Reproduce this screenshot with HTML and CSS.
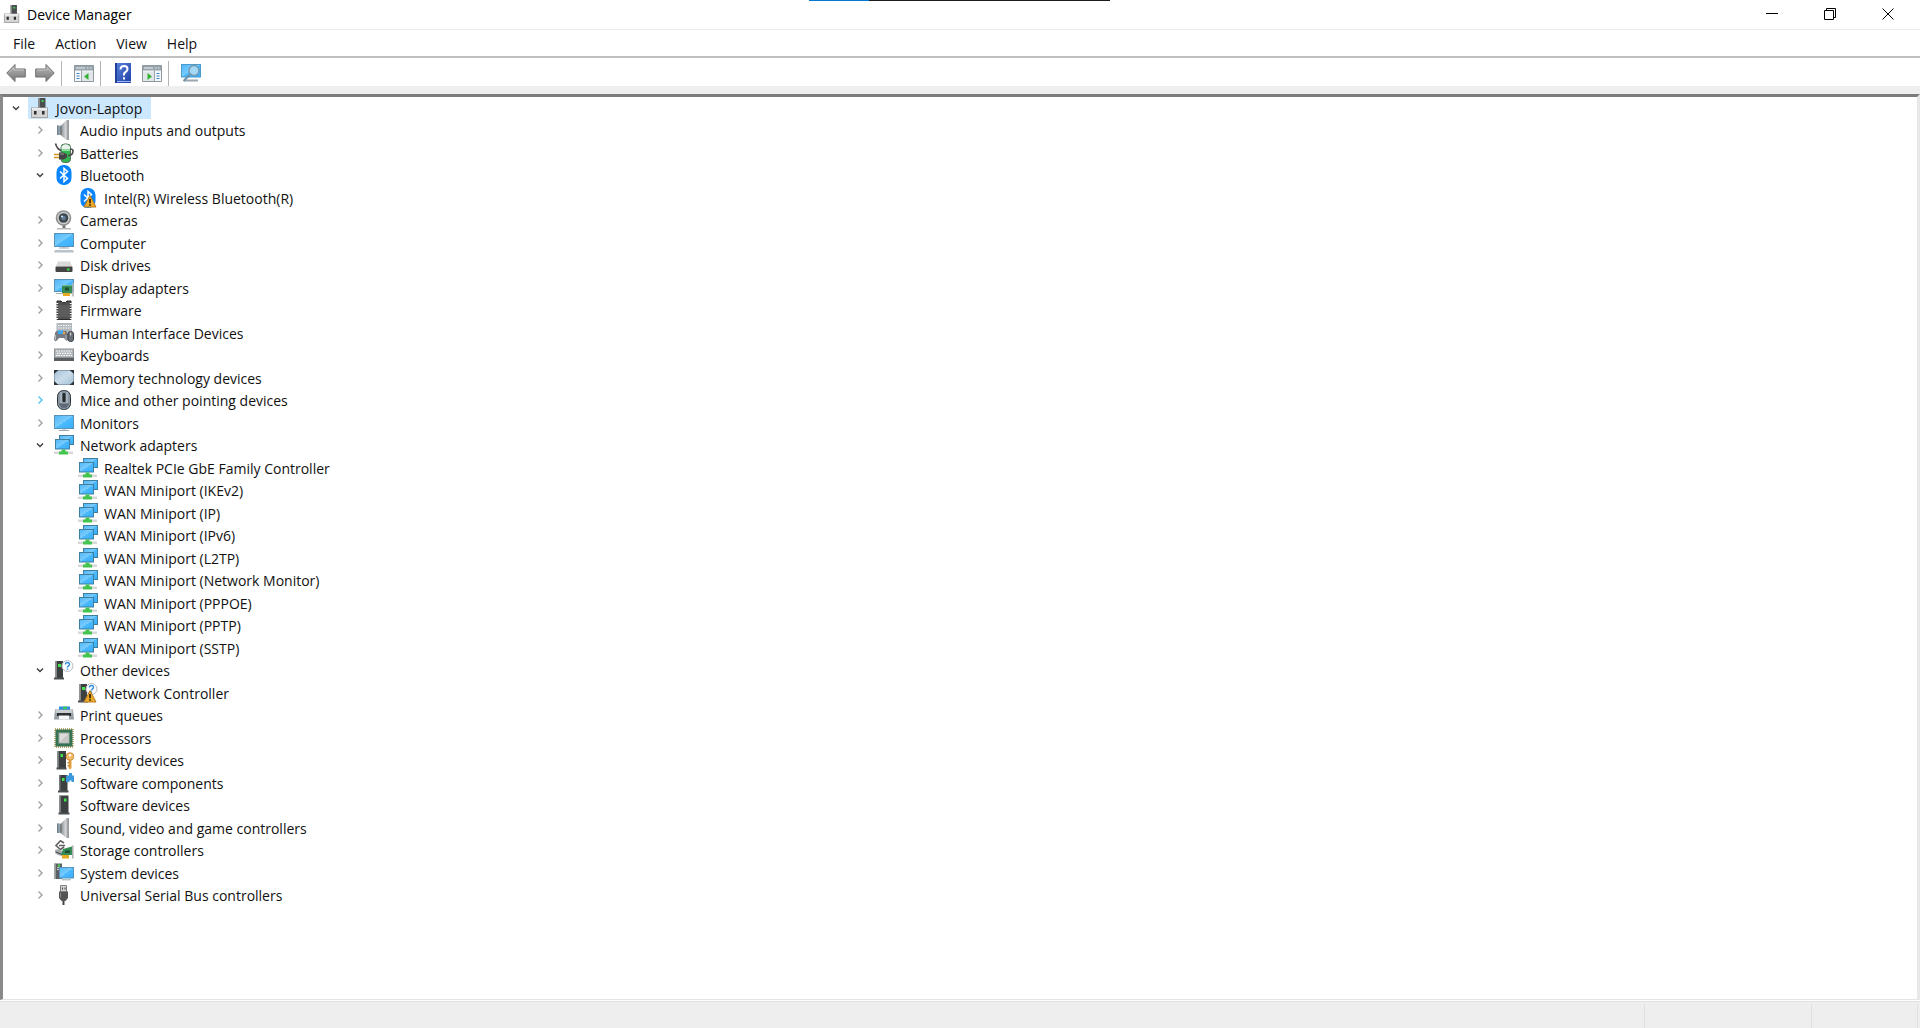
FILE: index.html
```html
<!DOCTYPE html>
<html lang="en">
<head>
    <meta charset="UTF-8">
    <meta name="viewport" content="width=device-width, initial-scale=1.0">
    <title>Device Manager</title>
    <link rel="stylesheet" href="styles.css">
</head>
<body>
    <!-- Icon set, 20x20 each -->
    <svg class="sprite" aria-hidden="true">
        <defs>
            <linearGradient id="screen" x1="0" y1="0" x2="1" y2="1">
                <stop offset="0" stop-color="#4fb6f8"/>
                <stop offset="0.5" stop-color="#7accfd"/>
                <stop offset="0.5" stop-color="#4dbafe"/>
                <stop offset="1" stop-color="#36adfc"/>
            </linearGradient>
            <linearGradient id="cone" x1="0" y1="0" x2="1" y2="0">
                <stop offset="0" stop-color="#84898d"/>
                <stop offset="0.6" stop-color="#d3d5d7"/>
                <stop offset="1" stop-color="#8b8e90"/>
            </linearGradient>
            <linearGradient id="metal" x1="0" y1="0" x2="0" y2="1">
                <stop offset="0" stop-color="#b8b8b8"/>
                <stop offset="1" stop-color="#777"/>
            </linearGradient>
            <linearGradient id="glass" x1="0" y1="0" x2="1" y2="1">
                <stop offset="0" stop-color="#a9c4da"/>
                <stop offset="0.5" stop-color="#c9dcea"/>
                <stop offset="1" stop-color="#a3bfd6"/>
            </linearGradient>
            <linearGradient id="book" x1="0" y1="0" x2="1" y2="1">
                <stop offset="0" stop-color="#5b83dc"/>
                <stop offset="1" stop-color="#1d3fa8"/>
            </linearGradient>
        </defs>
        <symbol id="closed" viewBox="0 0 10 10"><path d="M3.500 1.500L7 5 3.500 8.500" fill="none" stroke="currentColor" stroke-width="1.400"/></symbol>
        <symbol id="open" viewBox="0 0 10 10"><path d="M2 3.500l3 3 3-3" fill="none" stroke="currentColor" stroke-width="1.500"/></symbol>

        <symbol id="root" viewBox="0 0 20 20">
            <path d="M8.500 0h7v10h-7z" fill="#4b4e50"/><path d="M8.500 0h1.500v10H8.500z" fill="#888"/>
            <path d="M11.500 2h2v2h-2z" fill="#3fd24a"/>
            <path d="M1 9.500h17V20H1z" fill="#a5a5a5"/><path d="M2 10h15v9H2z" fill="#d5d5d5"/>
            <path d="M2 10h15v2H2z" fill="#ececec"/><path d="M4 13h2.500v3.500H4zM12 13h2.500v3.500H12z" fill="#2c2c2c"/>
        </symbol>
        <symbol id="speaker" viewBox="0 0 20 20">
            <path d="M3 5.500h4V15H3z" fill="#93a3ae"/><path d="M3 5.500h1.200V15H3z" fill="#717e88"/>
            <path d="M6.500 6L12.500 0H15v20h-2.500l-6-5z" fill="url(#cone)"/>
            <path d="M13.500 0H15v20h-1.500z" fill="#999c9e"/><path d="M7 6.500v8" stroke="#62686d"/>
        </symbol>
        <symbol id="battery" viewBox="0 0 20 20">
            <rect x="7" y="1" width="9.500" height="18.500" rx="3.500" fill="#34b552" stroke="#56705c"/>
            <path d="M7.500 3.500Q11.500-1 16 3.500V6.500H7.500z" fill="#e9f1ed"/>
            <path d="M8 7.500h8" stroke="#8ee69f"/>
            <path d="M1.500 0.500Q3 6 7 7.500M14 12.500q5 0 5-4.500 0-2-3-2" fill="none" stroke="#4a4a4a" stroke-width="1.600"/>
            <path d="M0 11.500h5M0 14.500h5" stroke="#cf9418" stroke-width="1.600"/>
            <path d="M5 9.500h4.500l3.500 2v3l-3.500 2H5z" fill="#444"/><path d="M6 11h4" stroke="#999"/>
        </symbol>
        <symbol id="bluetooth" viewBox="0 0 20 20">
            <rect x="2.500" width="15" height="20" rx="7" fill="#0a84ff"/>
            <path d="M6 6.500l7.500 7L10 16.500V3.500l3.500 3L6 13.500" fill="none" stroke="#fff" stroke-width="1.500"/>
        </symbol>
        <symbol id="warn" viewBox="0 0 20 20">
            <path d="M12 7.500L18 19H6z" fill="#eda928" stroke="#b67c22" stroke-linejoin="round"/>
            <path d="M12 11v4.300M12 16.300v1.500" stroke="#2b1d00" stroke-width="1.600"/>
        </symbol>
        <symbol id="camera" viewBox="0 0 20 20">
            <path d="M8.500 14h3v4h-3z" fill="#777"/><path d="M3 18.800h14" stroke="#a8a8a8" stroke-width="1.200"/>
            <circle cx="9.500" cy="8" r="7.800" fill="#929292"/><circle cx="9.500" cy="8" r="6.200" fill="#cfcfcf"/>
            <circle cx="9.500" cy="8" r="4.800" fill="#3f474e"/><circle cx="9.500" cy="8" r="2.300" fill="#607c96"/><circle cx="8" cy="6.500" r="1" fill="#d8ecff"/>
        </symbol>
        <symbol id="monitor" viewBox="0 0 20 20">
            <rect x="0.500" y="2.500" width="19" height="13" fill="url(#screen)" stroke="#5a93b8"/>
            <path d="M8 16h4v1H8z" fill="#d5dde2"/><path d="M5 17.500h10" stroke="#98a8b2"/>
        </symbol>
        <symbol id="computer" viewBox="0 0 20 20">
            <rect x="0.500" y="0.500" width="19" height="13" fill="url(#screen)" stroke="#5a93b8"/>
            <path d="M8 14h4v1H8z" fill="#d5dde2"/><path d="M5 15h10" stroke="#98a8b2"/>
            <path d="M1 17h18l1 2.500H0z" fill="#b9c2c9"/>
        </symbol>
        <symbol id="disk" viewBox="0 0 20 20">
            <path d="M4 6.500h12l2.500 5.500h-17z" fill="#d9d9d9"/><rect x="1.500" y="11.500" width="17" height="5.500" rx="1" fill="#444"/>
            <path d="M2 11.500h16" stroke="#9a9a9a"/><path d="M13 13.500h2.500v2H13z" fill="#39dd48"/>
        </symbol>
        <symbol id="display" viewBox="0 0 20 20">
            <rect x="0.500" y="1.500" width="19" height="12" fill="url(#screen)" stroke="#5a93b8"/><path d="M2 15.500h6" stroke="#a4b0b8"/>
            <path d="M8 7.500h10v8H8z" fill="#358a56"/><path d="M11 9.500h4v3h-4z" fill="#1d4f33"/><path d="M8 7.500h10" stroke="#74b98c"/>
            <path d="M9 15h7v3H9z" fill="#e7a823"/><path d="M19 5v13.500" stroke="#b3b3b3" stroke-width="1.600"/>
        </symbol>
        <symbol id="firmware" viewBox="0 0 20 20">
            <path d="M3 1h4l1.500 1.500h3L13 1h4v18.500H3z" fill="#505050" stroke="#292929"/>
            <path d="M3 3v16M17 3v16" stroke="#f4f4f4" stroke-width="2.500" stroke-dasharray="1 1.500"/>
            <path d="M5 5h10v12H5z" fill="#5c5c5c"/>
        </symbol>
        <symbol id="hid" viewBox="0 0 20 20">
            <path d="M2.500 0H18v9H2.500z" fill="#b3b8bd"/><path d="M4 2.500h13M4 5h13" stroke="#fff" stroke-width="1.200" stroke-dasharray="1.500 1"/>
            <path d="M1 10q1-3 4-2h5q3-1 4 3v6q-2 2-4-2H5q-3 5-5 2z" fill="#747b82"/>
            <path d="M4 7.500h5v3.500H4z" fill="#3aa8f5"/><circle cx="10" cy="10" r="1.200" fill="#f4a13b"/>
            <path d="M6 15h3v4H6z" fill="#fff"/>
            <rect x="14" y="8.500" width="5.500" height="10" rx="2.500" fill="#68707a" stroke="#3e4348"/><path d="M16.700 9.500v3" stroke="#ddd"/>
            <path d="M1.500 12v5M12 12v5" stroke="#b3b8bd"/>
        </symbol>
        <symbol id="keyboard" viewBox="0 0 20 20">
            <path d="M0 3.500h20V16H0z" fill="#8d9195"/><path d="M1 4.500h18V12H1z" fill="#b4b8bc"/>
            <path d="M2 6h16M3 8.300h14M2 10.500h16" stroke="#fff" stroke-width="1.200" stroke-dasharray="1.500 1"/><path d="M0 13h20v3H0z" fill="#5a5e63"/>
        </symbol>
        <symbol id="memory" viewBox="0 0 20 20">
            <rect x="0.500" y="2.500" width="19" height="14" fill="url(#glass)" stroke="#8ba0b0"/>
            <path d="M0 2h4.500L0 6zM20 2h-4.500L20 6zM0 17h4.500L0 13zM20 17h-4.500l4.500-4z" fill="#2e3338"/>
        </symbol>
        <symbol id="mouse" viewBox="0 0 20 20">
            <rect x="3.500" y="0.500" width="13" height="19" rx="6" fill="#8795a3" stroke="#30353a"/>
            <path d="M5 13q5 2 10 0-1 5-5 5t-5-5z" fill="#5d6873"/><path d="M7 2v11M13 2v11" stroke="#c2cbd3" fill="none"/>
            <rect x="8.500" y="3" width="3" height="9" rx="1" fill="#24282c"/>
        </symbol>
        <symbol id="network" viewBox="0 0 20 20">
            <path d="M0 16.500h19v2.500H0z" fill="#d6d9d7"/>
            <rect x="5.500" y="0.500" width="14" height="9" fill="url(#screen)" stroke="#417f9f"/>
            <rect x="1.500" y="4.500" width="14" height="9.500" fill="url(#screen)" stroke="#417f9f"/>
            <path d="M7.500 14.500h4V16.500h2.500v3H5v-3h2.500z" fill="#43c44e"/>
        </symbol>
        <symbol id="tower" viewBox="0 0 20 20">
            <path d="M5.500 0.500h9V18h-9z" fill="#3c4041"/><path d="M5.500 0.500H7V18H5.500z" fill="#777b7d"/>
            <path d="M4.500 17.500h11v2h-11z" fill="#4c4f50"/><path d="M10 3.500h2.500v3H10z" fill="#41e34d"/>
        </symbol>
        <symbol id="unknown" viewBox="0 0 20 20">
            <path d="M1.500 1H9v17H1.500z" fill="#3c4041"/><path d="M1.500 1H3v17H1.500z" fill="#888"/><path d="M0 17.500h10v2H0z" fill="#4c4f50"/>
            <path d="M4 4h3v3H4z" fill="#41e34d"/>
            <circle cx="13.500" cy="6" r="5.500" fill="#fafcff" stroke="#b6bcc1"/>
            <path d="M11.500 4.500q0-2 2-2t2 1.800q0 1-1 1.600t-1 1.600M13.500 8.500v1.300" fill="none" stroke="#2f8be0" stroke-width="1.400"/>
        </symbol>
        <symbol id="printer" viewBox="0 0 20 20">
            <path d="M5 1.500h11V6H5z" fill="#2d8fe0"/><path d="M9 1.500h4v2.500H9z" fill="#3bc765"/>
            <path d="M1 4.500h18l1 10H0z" fill="#989ea2"/><path d="M1.500 5h17v3h-17z" fill="#c9ced1"/>
            <path d="M3 8h14v3H3z" fill="#2e3133"/><path d="M5 10.500h10v4H5z" fill="#f6f6f6"/>
        </symbol>
        <symbol id="processor" viewBox="0 0 20 20">
            <rect x="1" y="1" width="18" height="18" fill="none" stroke="#c5a76c" stroke-width="1.800" stroke-dasharray="1 1"/>
            <rect x="1.500" y="1.500" width="17" height="17" fill="#357352"/><rect x="5" y="5" width="10" height="10" fill="#dcdcdc" stroke="#9eaba3"/>
            <path d="M6 14l8-8v8z" fill="#c7c7c7"/>
        </symbol>
        <symbol id="security" viewBox="0 0 20 20">
            <path d="M3.500 1H12v17H3.500z" fill="#3c4041"/><path d="M3.500 1H5v17H3.500z" fill="#777b7d"/><path d="M2.500 17.500h10v2h-10z" fill="#4c4f50"/>
            <path d="M6.500 4H9v3H6.500z" fill="#41e34d"/>
            <path d="M14.700 8h2.800v10l-1.400 1.500-1.400-1.500z" fill="#e0a144"/><path d="M13.500 12h2v1.500h-2zM13.500 15h2v1.500h-2z" fill="#c08433"/>
            <circle cx="16" cy="6.500" r="3.800" fill="#f3bb66" stroke="#cf8f37"/><circle cx="16" cy="5.300" r="1.200" fill="#fff"/>
        </symbol>
        <symbol id="component" viewBox="0 0 20 20">
            <path d="M5 2h8.500v16H5z" fill="#3c4041"/><path d="M5 2h1.500v16H5z" fill="#777b7d"/><path d="M4 17.500h10.500v2H4z" fill="#4c4f50"/>
            <path d="M8 5h2.500v3H8z" fill="#41e34d"/>
            <path d="M12 2.500h3V0h3v2.500h2V9h-2.500V7.500h-2V9H12z" fill="#3a98dc"/>
        </symbol>
        <symbol id="storage" viewBox="0 0 20 20">
            <path d="M10 3L6.500 0.800 2 5.500l4.500 4L10 7M5 5.500h6" fill="none" stroke="#5f5f5f" stroke-width="1.600"/>
            <path d="M1 10q4-2 7 1v5q-4 0-7-3z" fill="#a4a9ac"/><path d="M2 12l6 2.500" stroke="#444"/>
            <path d="M9 9l9-2.500v8.500H7z" fill="#358a56"/><path d="M11 10.500h5V13h-5z" fill="#1d4f33"/>
            <path d="M8 15h7v3.500H8z" fill="#e7a823"/><path d="M18.800 5.500v13" stroke="#aaa" stroke-width="1.400"/>
        </symbol>
        <symbol id="system" viewBox="0 0 20 20">
            <path d="M0.500 0.500H8V16H0.500z" fill="#5a6063"/><path d="M0.500 0.500H2V16H0.500z" fill="#969a9c"/><path d="M3 4.500h4M3 6.500h4" stroke="#ccc"/>
            <path d="M4 1.500h2v2H4z" fill="#41e34d"/>
            <rect x="5.500" y="4.500" width="14" height="10.500" fill="url(#screen)" stroke="#5a93b8"/><path d="M8 16.800h9" stroke="#98a8b2"/>
        </symbol>
        <symbol id="usb" viewBox="0 0 20 20">
            <path d="M6.500 0.500h6V7h-6z" fill="#d4d4d4" stroke="#7f7f7f"/><path d="M8 2.500h1v2H8zM10.500 2.500h1v2h-1z" fill="#444"/>
            <path d="M5 6.500h9V13l-2.500 3h-4L5 13z" fill="#545454"/><path d="M6.500 7.500v5" stroke="#8c8c8c"/><path d="M8.500 16h2v4h-2z" fill="#444"/>
        </symbol>

        <symbol id="back" viewBox="0 0 20 20">
            <path d="M0.800 10L9 1.500V6h10.300v8H9v4.500z" fill="url(#metal)" stroke="#6f6f6f" stroke-linejoin="round"/>
            <path d="M3 9.500l5-5V7h10" fill="none" stroke="#c4c4c4"/>
        </symbol>
        <symbol id="forward" viewBox="0 0 20 20">
            <path d="M19.200 10L11 1.500V6H0.700v8H11v4.500z" fill="url(#metal)" stroke="#6f6f6f" stroke-linejoin="round"/>
            <path d="M2 7h10V4.500l5 5" fill="none" stroke="#c4c4c4"/>
        </symbol>
        <symbol id="console" viewBox="0 0 20 20">
            <path d="M0.500 2.500h19v16H0.500z" fill="#f5f7f8" stroke="#8d989f"/><path d="M1 3h18v4.500H1z" fill="#98a4ac"/>
            <path d="M2 5h9M13 5h1.500M16 5h1.500" stroke="#e8edf0"/><path d="M7.500 7.500V18" stroke="#98a4ac"/>
            <path d="M2.500 10.500h3M2.500 13h3M2.500 15.500h3" stroke="#3d86c4"/><path d="M8 8.500h11V18H8z" fill="#e1e6e9"/><path d="M14.500 10v7L10 13.500z" fill="#35b235"/>
        </symbol>
        <symbol id="action-pane" viewBox="0 0 20 20">
            <path d="M0.500 2.500h19v16H0.500z" fill="#f5f7f8" stroke="#8d989f"/><path d="M1 3h18v4.500H1z" fill="#98a4ac"/>
            <path d="M2 5h9M13 5h1.500M16 5h1.500" stroke="#e8edf0"/><path d="M12.500 7.500V18" stroke="#98a4ac"/>
            <path d="M14.500 10.500h3M14.500 13h3M14.500 15.500h3" stroke="#3d86c4"/><path d="M1 8.500h11V18H1z" fill="#e1e6e9"/><path d="M5.500 10v7l4.500-3.500z" fill="#35b235"/>
        </symbol>
        <symbol id="help" viewBox="0 0 20 20">
            <path d="M2 0h16v20H2z" fill="url(#book)"/><path d="M2 0h2v20H2z" fill="#20409b"/>
            <path d="M4 18.500h14" stroke="#9ab4ee"/>
            <path d="M7.500 6.500Q7.500 3 11 3t3.500 3q0 2-2 3.200T11 12.500M11 14.200v2.300" fill="none" stroke="#fff" stroke-width="2"/>
        </symbol>
        <symbol id="scan" viewBox="0 0 20 20">
            <rect x="0.500" y="1.500" width="19" height="12.500" fill="url(#screen)" stroke="#4b9cc9"/>
            <path d="M3 17.500h14" stroke="#9aa5ad" stroke-width="2"/>
            <path d="M9.500 11l-7 7" stroke="#6c91ab" stroke-width="2"/><circle cx="13" cy="7.500" r="5" fill="#a6d8f7" stroke="#7799af" stroke-width="1.400"/>
        </symbol>
    </svg>

    <div class="taskbar-peek"></div>

    <header class="titlebar">
        <svg class="title-icon"><use href="#root"/></svg>
        <h1>Device Manager</h1>
        <div class="window-buttons">
            <button aria-label="Minimize"><svg viewBox="0 0 12 12"><path d="M0 5.500h12"/></svg></button>
            <button aria-label="Restore"><svg viewBox="0 0 12 12"><path d="M0.500 2.500h9v9h-9zM2.500 2.500v-2h9v9h-2"/></svg></button>
            <button aria-label="Close"><svg viewBox="0 0 12 12"><path d="M0.500 0.500l11 11M11.500 0.500l-11 11"/></svg></button>
        </div>
    </header>

    <nav class="menubar">
        <button>File</button>
        <button>Action</button>
        <button>View</button>
        <button>Help</button>
    </nav>

    <div class="toolbar">
        <button aria-label="Back"><svg class="icon"><use href="#back"/></svg></button>
        <button aria-label="Forward"><svg class="icon"><use href="#forward"/></svg></button>
        <span class="separator"></span>
        <button aria-label="Show or hide console tree"><svg class="icon"><use href="#console"/></svg></button>
        <span class="separator"></span>
        <button aria-label="Help topics"><svg class="icon"><use href="#help"/></svg></button>
        <button aria-label="Show or hide action pane"><svg class="icon"><use href="#action-pane"/></svg></button>
        <span class="separator"></span>
        <button aria-label="Scan for hardware changes"><svg class="icon"><use href="#scan"/></svg></button>
    </div>

    <main class="pane">
        <ul class="tree" role="tree">
            <li class="row" role="treeitem" aria-level="1"><button class="toggle open" aria-label="Collapse"><svg><use href="#open"/></svg></button><span class="item selected"><svg class="icon"><use href="#root"/></svg>Jovon-Laptop</span></li>
            <li class="row class" role="treeitem" aria-level="2"><button class="toggle" aria-label="Expand"><svg><use href="#closed"/></svg></button><span class="item"><svg class="icon"><use href="#speaker"/></svg>Audio inputs and outputs</span></li>
            <li class="row class" role="treeitem" aria-level="2"><button class="toggle" aria-label="Expand"><svg><use href="#closed"/></svg></button><span class="item"><svg class="icon"><use href="#battery"/></svg>Batteries</span></li>
            <li class="row class" role="treeitem" aria-level="2"><button class="toggle open" aria-label="Collapse"><svg><use href="#open"/></svg></button><span class="item"><svg class="icon"><use href="#bluetooth"/></svg>Bluetooth</span></li>
            <li class="row device" role="treeitem" aria-level="3"><span class="item"><svg class="icon"><use href="#bluetooth"/><use href="#warn"/></svg>Intel(R) Wireless Bluetooth(R)</span></li>
            <li class="row class" role="treeitem" aria-level="2"><button class="toggle" aria-label="Expand"><svg><use href="#closed"/></svg></button><span class="item"><svg class="icon"><use href="#camera"/></svg>Cameras</span></li>
            <li class="row class" role="treeitem" aria-level="2"><button class="toggle" aria-label="Expand"><svg><use href="#closed"/></svg></button><span class="item"><svg class="icon"><use href="#computer"/></svg>Computer</span></li>
            <li class="row class" role="treeitem" aria-level="2"><button class="toggle" aria-label="Expand"><svg><use href="#closed"/></svg></button><span class="item"><svg class="icon"><use href="#disk"/></svg>Disk drives</span></li>
            <li class="row class" role="treeitem" aria-level="2"><button class="toggle" aria-label="Expand"><svg><use href="#closed"/></svg></button><span class="item"><svg class="icon"><use href="#display"/></svg>Display adapters</span></li>
            <li class="row class" role="treeitem" aria-level="2"><button class="toggle" aria-label="Expand"><svg><use href="#closed"/></svg></button><span class="item"><svg class="icon"><use href="#firmware"/></svg>Firmware</span></li>
            <li class="row class" role="treeitem" aria-level="2"><button class="toggle" aria-label="Expand"><svg><use href="#closed"/></svg></button><span class="item"><svg class="icon"><use href="#hid"/></svg>Human Interface Devices</span></li>
            <li class="row class" role="treeitem" aria-level="2"><button class="toggle" aria-label="Expand"><svg><use href="#closed"/></svg></button><span class="item"><svg class="icon"><use href="#keyboard"/></svg>Keyboards</span></li>
            <li class="row class" role="treeitem" aria-level="2"><button class="toggle" aria-label="Expand"><svg><use href="#closed"/></svg></button><span class="item"><svg class="icon"><use href="#memory"/></svg>Memory technology devices</span></li>
            <li class="row class" role="treeitem" aria-level="2"><button class="toggle hot" aria-label="Expand"><svg><use href="#closed"/></svg></button><span class="item"><svg class="icon"><use href="#mouse"/></svg>Mice and other pointing devices</span></li>
            <li class="row class" role="treeitem" aria-level="2"><button class="toggle" aria-label="Expand"><svg><use href="#closed"/></svg></button><span class="item"><svg class="icon"><use href="#monitor"/></svg>Monitors</span></li>
            <li class="row class" role="treeitem" aria-level="2"><button class="toggle open" aria-label="Collapse"><svg><use href="#open"/></svg></button><span class="item"><svg class="icon"><use href="#network"/></svg>Network adapters</span></li>
            <li class="row device" role="treeitem" aria-level="3"><span class="item"><svg class="icon"><use href="#network"/></svg>Realtek PCIe GbE Family Controller</span></li>
            <li class="row device" role="treeitem" aria-level="3"><span class="item"><svg class="icon"><use href="#network"/></svg>WAN Miniport (IKEv2)</span></li>
            <li class="row device" role="treeitem" aria-level="3"><span class="item"><svg class="icon"><use href="#network"/></svg>WAN Miniport (IP)</span></li>
            <li class="row device" role="treeitem" aria-level="3"><span class="item"><svg class="icon"><use href="#network"/></svg>WAN Miniport (IPv6)</span></li>
            <li class="row device" role="treeitem" aria-level="3"><span class="item"><svg class="icon"><use href="#network"/></svg>WAN Miniport (L2TP)</span></li>
            <li class="row device" role="treeitem" aria-level="3"><span class="item"><svg class="icon"><use href="#network"/></svg>WAN Miniport (Network Monitor)</span></li>
            <li class="row device" role="treeitem" aria-level="3"><span class="item"><svg class="icon"><use href="#network"/></svg>WAN Miniport (PPPOE)</span></li>
            <li class="row device" role="treeitem" aria-level="3"><span class="item"><svg class="icon"><use href="#network"/></svg>WAN Miniport (PPTP)</span></li>
            <li class="row device" role="treeitem" aria-level="3"><span class="item"><svg class="icon"><use href="#network"/></svg>WAN Miniport (SSTP)</span></li>
            <li class="row class" role="treeitem" aria-level="2"><button class="toggle open" aria-label="Collapse"><svg><use href="#open"/></svg></button><span class="item"><svg class="icon"><use href="#unknown"/></svg>Other devices</span></li>
            <li class="row device" role="treeitem" aria-level="3"><span class="item"><svg class="icon"><use href="#unknown"/><use href="#warn"/></svg>Network Controller</span></li>
            <li class="row class" role="treeitem" aria-level="2"><button class="toggle" aria-label="Expand"><svg><use href="#closed"/></svg></button><span class="item"><svg class="icon"><use href="#printer"/></svg>Print queues</span></li>
            <li class="row class" role="treeitem" aria-level="2"><button class="toggle" aria-label="Expand"><svg><use href="#closed"/></svg></button><span class="item"><svg class="icon"><use href="#processor"/></svg>Processors</span></li>
            <li class="row class" role="treeitem" aria-level="2"><button class="toggle" aria-label="Expand"><svg><use href="#closed"/></svg></button><span class="item"><svg class="icon"><use href="#security"/></svg>Security devices</span></li>
            <li class="row class" role="treeitem" aria-level="2"><button class="toggle" aria-label="Expand"><svg><use href="#closed"/></svg></button><span class="item"><svg class="icon"><use href="#component"/></svg>Software components</span></li>
            <li class="row class" role="treeitem" aria-level="2"><button class="toggle" aria-label="Expand"><svg><use href="#closed"/></svg></button><span class="item"><svg class="icon"><use href="#tower"/></svg>Software devices</span></li>
            <li class="row class" role="treeitem" aria-level="2"><button class="toggle" aria-label="Expand"><svg><use href="#closed"/></svg></button><span class="item"><svg class="icon"><use href="#speaker"/></svg>Sound, video and game controllers</span></li>
            <li class="row class" role="treeitem" aria-level="2"><button class="toggle" aria-label="Expand"><svg><use href="#closed"/></svg></button><span class="item"><svg class="icon"><use href="#storage"/></svg>Storage controllers</span></li>
            <li class="row class" role="treeitem" aria-level="2"><button class="toggle" aria-label="Expand"><svg><use href="#closed"/></svg></button><span class="item"><svg class="icon"><use href="#system"/></svg>System devices</span></li>
            <li class="row class" role="treeitem" aria-level="2"><button class="toggle" aria-label="Expand"><svg><use href="#closed"/></svg></button><span class="item"><svg class="icon"><use href="#usb"/></svg>Universal Serial Bus controllers</span></li>
        </ul>
    </main>

    <footer class="statusbar">
        <span class="status-main"></span>
        <span class="status-wide"></span>
        <span class="status-narrow"></span>
    </footer>
</body>
</html>
```
FILE: styles.css
```css
* {
    box-sizing: border-box;
}
body {
    margin: 0;
    min-height: 100vh;
    display: flex;
    flex-direction: column;
    background-color: #fff;
    color: #111;
    font-family: "Open Sans", "Noto Sans", sans-serif;
    font-size: 14px;
}
button {
    border: none;
    padding: 0;
    background: none;
    color: inherit;
    font: inherit;
}
.sprite {
    position: absolute;
    width: 0;
    height: 0;
}
.icon {
    flex: none;
    width: 20px;
    height: 20px;
}

/* Edge of the hidden taskbar, lies over the title bar */
.taskbar-peek {
    position: absolute;
    top: 0;
    left: 50%;
    width: 301px;
    height: 1px;
    margin-left: -151px;
    border-left: 60px solid #0078d7;
    background-color: #1c1c1c;
}

.titlebar {
    display: flex;
    align-items: center;
    height: 30px;
    padding: 0 3px 1px;
    border-bottom: 1px solid #ebebeb;
}
.title-icon {
    width: 18px;
    height: 20px;
}
.titlebar h1 {
    margin: 0 0 0 6px;
    font-size: 14px;
    font-weight: normal;
    color: #000;
}
.window-buttons {
    display: flex;
    margin-left: auto;
}
.window-buttons button {
    display: flex;
    align-items: center;
    justify-content: center;
    width: 58px;
    height: 28px;
}
.window-buttons svg {
    width: 12px;
    height: 12px;
    fill: none;
    stroke: #000;
}

.menubar {
    display: flex;
    height: 28px;
    padding-left: 3px;
    border-bottom: 2px solid #c0c0c0;
}
.menubar button {
    padding: 0 10px;
}

.toolbar {
    display: flex;
    align-items: center;
    gap: 1px;
    height: 28px;
    padding: 2px 0 0 2px;
}
.toolbar button {
    display: flex;
    align-items: center;
    justify-content: center;
    width: 28px;
    height: 26px;
}
.separator {
    width: 1px;
    height: 25px;
    margin: 0 7px 0 1px;
    background-color: #b4b4b4;
}

.pane {
    flex: 1;
    border-style: solid;
    border-color: #7c7c7c #e8e8e8 #e3e3e3 #8a8a8a;
    border-width: 3px 3px 1px 3px;
    box-shadow: 0 -8px #eee;
    margin-top: 8px;
}
.tree {
    display: grid;
    grid-auto-rows: 22px 23px;
    margin: 0;
    padding: 0 0 0 1px;
    list-style: none;
}
.row {
    display: flex;
    align-items: flex-start;
}
.row.class {
    padding-left: 24px;
}
.row.device {
    padding-left: 72px;
}
.toggle {
    display: flex;
    align-items: center;
    justify-content: center;
    width: 24px;
    height: 22px;
    color: #a0a0a0;
}
.toggle.open {
    color: #404040;
}
.toggle.hot {
    color: #4ec4f5;
}
.toggle svg {
    width: 10px;
    height: 10px;
}
.item {
    display: flex;
    align-items: center;
    gap: 6px;
    height: 22px;
    padding: 0 9px 0 2px;
    white-space: nowrap;
}
.selected {
    background-color: #cce8ff;
}

.statusbar {
    display: flex;
    height: 27px;
    margin-top: 1px;
    padding: 2px 2px 0 0;
    border-top: 1px solid #e0e0e0;
    background-color: #eee;
}
.statusbar span {
    border-right: 1px solid #e0e0e0;
}
.status-main {
    flex: 1;
}
.status-wide {
    width: 167px;
}
.status-narrow {
    width: 106px;
}
```
